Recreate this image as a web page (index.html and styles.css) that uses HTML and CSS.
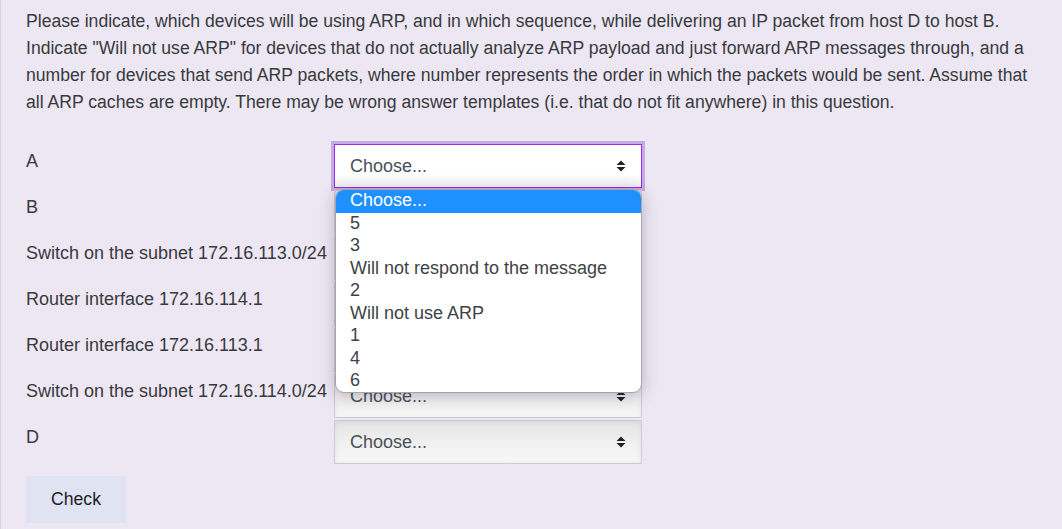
FILE: index.html
```html
<!DOCTYPE html>
<html lang="en">
<head>
<meta charset="utf-8">
<title>ARP question</title>
<link rel="stylesheet" href="styles.css">
</head>
<body>
<div class="page">
  <p class="qtext">Please indicate, which devices will be using ARP, and in which sequence, while delivering an IP packet from host D to host B. Indicate "Will not use ARP" for devices that do not actually analyze ARP payload and just forward ARP messages through, and a number for devices that send ARP packets, where number represents the order in which the packets would be sent. Assume that all ARP caches are empty. There may be wrong answer templates (i.e. that do not fit anywhere) in this question.</p>

  <div class="rows">
    <div class="row">
      <div class="label">A</div>
      <div class="select focused"><span>Choose...</span><svg class="arrows" viewBox="0 0 10 12" width="10" height="12"><path d="M5 0.5 L9.5 5 L0.5 5 Z M5 11.5 L9.5 7 L0.5 7 Z" fill="#222"/></svg></div>
    </div>
    <div class="row">
      <div class="label">B</div>
      <div class="select"><span>Choose...</span><svg class="arrows" viewBox="0 0 10 12" width="10" height="12"><path d="M5 0.5 L9.5 5 L0.5 5 Z M5 11.5 L9.5 7 L0.5 7 Z" fill="#222"/></svg></div>
    </div>
    <div class="row">
      <div class="label">Switch on the subnet 172.16.113.0/24</div>
      <div class="select"><span>Choose...</span><svg class="arrows" viewBox="0 0 10 12" width="10" height="12"><path d="M5 0.5 L9.5 5 L0.5 5 Z M5 11.5 L9.5 7 L0.5 7 Z" fill="#222"/></svg></div>
    </div>
    <div class="row">
      <div class="label">Router interface 172.16.114.1</div>
      <div class="select"><span>Choose...</span><svg class="arrows" viewBox="0 0 10 12" width="10" height="12"><path d="M5 0.5 L9.5 5 L0.5 5 Z M5 11.5 L9.5 7 L0.5 7 Z" fill="#222"/></svg></div>
    </div>
    <div class="row">
      <div class="label">Router interface 172.16.113.1</div>
      <div class="select"><span>Choose...</span><svg class="arrows" viewBox="0 0 10 12" width="10" height="12"><path d="M5 0.5 L9.5 5 L0.5 5 Z M5 11.5 L9.5 7 L0.5 7 Z" fill="#222"/></svg></div>
    </div>
    <div class="row">
      <div class="label">Switch on the subnet 172.16.114.0/24</div>
      <div class="select"><span>Choose...</span><svg class="arrows" viewBox="0 0 10 12" width="10" height="12"><path d="M5 0.5 L9.5 5 L0.5 5 Z M5 11.5 L9.5 7 L0.5 7 Z" fill="#222"/></svg></div>
    </div>
    <div class="row">
      <div class="label">D</div>
      <div class="select"><span>Choose...</span><svg class="arrows" viewBox="0 0 10 12" width="10" height="12"><path d="M5 0.5 L9.5 5 L0.5 5 Z M5 11.5 L9.5 7 L0.5 7 Z" fill="#222"/></svg></div>
    </div>

    <ul class="dropdown">
      <li class="selected">Choose...</li>
      <li>5</li>
      <li>3</li>
      <li>Will not respond to the message</li>
      <li>2</li>
      <li>Will not use ARP</li>
      <li>1</li>
      <li>4</li>
      <li>6</li>
    </ul>
  </div>

  <button class="check" type="button">Check</button>
</div>
</body>
</html>
```

FILE: styles.css
```css
html, body {
  margin: 0;
  padding: 0;
}
body {
  background: #ede7f3;
  font-family: "Liberation Sans", Arial, sans-serif;
  font-size: 18px;
  color: #373a3c;
  border-left: 1px solid #d9d2e0;
  min-height: 529px;
  box-sizing: border-box;
}
.page {
  padding: 8px 16px 0 25px;
}
.qtext {
  margin: 0;
  font-size: 17.6px;
  line-height: 27px;
}
.rows {
  position: relative;
  margin-top: 28px;
  display: flex;
  flex-direction: column;
  gap: 2px;
}
.row {
  display: flex;
  align-items: flex-start;
  height: 44px;
}
.label {
  width: 308px;
  padding-top: 7px;
  line-height: 20px;
  white-space: nowrap;
}
.select {
  box-sizing: border-box;
  width: 308px;
  height: 44px;
  border: 1px solid #c9cbd6;
  background: linear-gradient(to bottom, #e4e4e4 0%, #efefef 45%, #f7f7f7 100%);
  box-shadow: inset 0 1px 6px rgba(0, 0, 0, 0.06);
  display: flex;
  align-items: center;
  justify-content: space-between;
  padding: 0 15px 0 15px;
  color: #495057;
}
.select.focused {
  border-color: #9a2bf0;
  background: linear-gradient(to bottom, #ffffff 0%, #ffffff 70%, #f0f0f0 100%);
  box-shadow: 0 0 0 3px #c6abe0;
}
.arrows {
  display: block;
}
.dropdown {
  position: absolute;
  top: 45px;
  left: 309px;
  width: 307px;
  height: 204px;
  box-sizing: border-box;
  margin: 0;
  padding: 0;
  list-style: none;
  background: #ffffff;
  border: 1px solid #a6a6a6;
  border-radius: 9px;
  overflow: hidden;
  box-shadow: 0 3px 16px rgba(60, 40, 80, 0.3);
}
.dropdown li {
  height: 22.5px;
  line-height: 21px;
  padding-left: 14px;
  color: #3e4246;
  white-space: nowrap;
}
.dropdown li.selected {
  background: #1e90ff;
  color: #ffffff;
}
.check {
  margin-top: 12px;
  width: 100px;
  height: 47px;
  border: none;
  background: #e0e3f2;
  color: #1d2125;
  font-family: "Liberation Sans", Arial, sans-serif;
  font-size: 17.6px;
  padding: 0;
}
```
